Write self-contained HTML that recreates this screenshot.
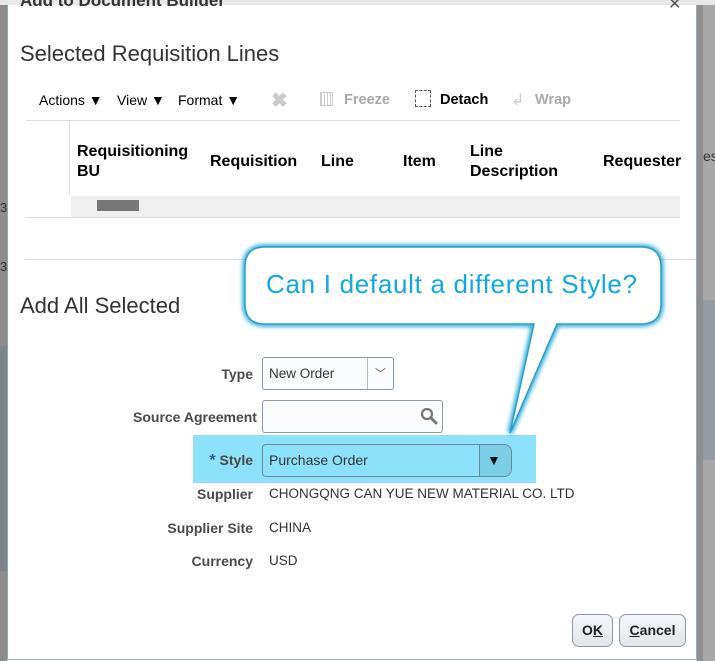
<!DOCTYPE html>
<html><head><meta charset="utf-8"><style>
*{margin:0;padding:0;box-sizing:border-box}
body{width:715px;height:661px;overflow:hidden;position:relative;background:#fff;font-family:"Liberation Sans",Arial,sans-serif;color:#333}
.a{position:absolute;white-space:nowrap}
.lbl{font-weight:bold;font-size:14px;color:#4a4a4a;text-align:right;width:120px}
.val{font-size:13.5px;color:#333}
.th{font-weight:bold;font-size:16px;color:#000;line-height:20px}
.tb{font-size:14px;color:#000}
</style></head><body>
<div class="a" style="left:0;top:0;width:7px;height:661px;background:#8c8c8c"></div>
<div class="a" style="left:0;top:346px;width:7px;height:225px;background:#7d838a"></div>
<div class="a" style="left:697px;top:0;width:18px;height:661px;background:#8f8f8f"></div>
<div class="a" style="left:703px;top:0;width:12px;height:661px;background:#a8a8a8"></div>
<div class="a" style="left:703px;top:300px;width:12px;height:160px;background:#959ba3"></div>
<div class="a" style="left:703px;top:148px;font-size:14px;color:#333">es</div>
<div class="a" style="left:0;top:200px;font-size:13px;color:#333">3</div>
<div class="a" style="left:0;top:259px;font-size:13px;color:#333">3</div>
<div class="a" style="left:0;top:0;width:715px;height:5px;background:#e8e8e8"></div>
<div class="a" style="left:7px;top:5px;width:690px;height:655px;background:#fff;border-left:1px solid #8aa;border-right:1px solid #9ab;border-bottom:1px solid #9ab"></div>
<div class="a" style="left:20px;top:-9px;font-size:17px;font-weight:bold;color:#333">Add to Document Builder</div>
<div class="a" style="left:668px;top:-6px;font-size:16px;color:#555">✕</div>
<div class="a" style="left:20px;top:41px;font-size:22px;color:#333">Selected Requisition Lines</div>
<div class="a tb" style="left:39px;top:92px">Actions&nbsp;▼</div>
<div class="a tb" style="left:117px;top:92px">View&nbsp;▼</div>
<div class="a tb" style="left:178px;top:92px">Format&nbsp;▼</div>
<div class="a" style="left:271px;top:88px;font-size:20px;color:#ccc;font-weight:bold">✖</div>
<div class="a" style="left:320px;top:92px;width:13px;height:14px;border:1px solid #ccc;background:repeating-linear-gradient(90deg,#ccc 0 1px,#fff 1px 3px)"></div>
<div class="a tb" style="left:344px;top:92px;color:#aaa;font-weight:bold;font-size:14.5px">Freeze</div>
<div class="a" style="left:415px;top:90px;width:16px;height:17px;border:1px dashed #555"></div>
<div class="a tb" style="left:440px;top:92px;font-weight:bold;font-size:14.5px">Detach</div>
<div class="a tb" style="left:511px;top:90px;color:#ccc;font-size:16px">↲</div>
<div class="a tb" style="left:535px;top:92px;color:#aaa;font-weight:bold;font-size:14.5px">Wrap</div>
<div class="a" style="left:26px;top:120px;width:654px;height:1px;background:#d6dfe6"></div>
<div class="a" style="left:69px;top:121px;width:1px;height:74px;background:#d6dfe6"></div>
<div class="a th" style="left:77px;top:142px">Requisitioning<br>BU</div>
<div class="a th" style="left:210px;top:152px">Requisition</div>
<div class="a th" style="left:321px;top:152px">Line</div>
<div class="a th" style="left:403px;top:152px">Item</div>
<div class="a th" style="left:470px;top:142px">Line<br>Description</div>
<div class="a th" style="left:603px;top:152px">Requester</div>
<div class="a" style="left:71px;top:196px;width:609px;height:21px;background:#efefef"></div>
<div class="a" style="left:97px;top:200px;width:42px;height:11px;background:#777"></div>
<div class="a" style="left:26px;top:217px;width:654px;height:1px;background:#d6dfe6"></div>
<div class="a" style="left:26px;top:259px;width:670px;height:1px;background:#d6dfe6"></div>
<div class="a" style="left:20px;top:293px;font-size:22px;color:#333">Add All Selected</div>
<div class="a lbl" style="left:133px;top:366px">Type</div>
<div class="a" style="left:262px;top:357px;width:132px;height:33px;border:1px solid #8b9aa6;border-radius:3px;background:#fbfcfd"></div>
<div class="a val" style="left:269px;top:366px">New Order</div>
<div class="a" style="left:367px;top:358px;width:1px;height:31px;background:#bbb"></div>
<div class="a" style="left:375px;top:365px;font-size:11px;color:#555">﹀</div>
<div class="a lbl" style="left:133px;top:409px">Source Agreement</div>
<div class="a" style="left:262px;top:400px;width:181px;height:33px;border:1px solid #8b9aa6;border-radius:3px;background:#fbfcfd"></div>
<svg class="a" style="left:420px;top:407px" width="18" height="18"><circle cx="7" cy="7" r="5" fill="none" stroke="#777" stroke-width="2.2"/><line x1="11" y1="11" x2="16" y2="16" stroke="#777" stroke-width="3" stroke-linecap="round"/></svg>
<div class="a" style="left:193px;top:435px;width:343px;height:48px;background:#8ee1fb"></div>
<div class="a lbl" style="left:133px;top:452px"><span style="color:#1a5fa0;font-size:16px">*</span> Style</div>
<div class="a" style="left:262px;top:444px;width:250px;height:33px;border:1px solid #6d8797;border-radius:4px 8px 8px 4px;background:#8ee1fb"></div>
<div class="a val" style="left:269px;top:452px;font-size:14px">Purchase Order</div>
<div class="a" style="left:479px;top:445px;width:32px;height:31px;border-left:1px solid #6d8797;background:#7ccde6;border-radius:0 7px 7px 0"></div>
<div class="a" style="left:487px;top:452px;font-size:14px;color:#111">▼</div>
<div class="a lbl" style="left:133px;top:486px">Supplier</div>
<div class="a val" style="left:269px;top:486px">CHONGQNG CAN YUE NEW MATERIAL CO. LTD</div>
<div class="a lbl" style="left:133px;top:520px">Supplier Site</div>
<div class="a val" style="left:269px;top:520px">CHINA</div>
<div class="a lbl" style="left:133px;top:553px">Currency</div>
<div class="a val" style="left:269px;top:553px">USD</div>
<div class="a" style="left:572px;top:614px;width:41px;height:33px;border:1px solid #8a9aa8;border-radius:7px;background:linear-gradient(#f4f6f8,#e2e7ec);font-weight:bold;font-size:14px;text-align:center;line-height:31px;color:#222">O<u>K</u></div>
<div class="a" style="left:619px;top:614px;width:67px;height:33px;border:1px solid #8a9aa8;border-radius:7px;background:linear-gradient(#f4f6f8,#e2e7ec);font-weight:bold;font-size:14px;text-align:center;line-height:31px;color:#222"><u>C</u>ancel</div>
<svg class="a" style="left:0;top:0" width="715" height="661">
<defs><filter id="g" x="-10%" y="-10%" width="120%" height="120%"><feGaussianBlur stdDeviation="2"/></filter></defs>
<path d="M265 247 H641 Q661 247 661 267 V304 Q661 324 641 324 H557 L510 433 L534 324 H265 Q245 324 245 304 V267 Q245 247 265 247 Z" fill="none" stroke="#1aa6d8" stroke-width="5" filter="url(#g)"/>
<path d="M265 247 H641 Q661 247 661 267 V304 Q661 324 641 324 H557 L510 433 L534 324 H265 Q245 324 245 304 V267 Q245 247 265 247 Z" fill="#fff" stroke="#2aa0c8" stroke-width="1.5"/>
<text x="266" y="293" font-family="Liberation Sans, Arial, sans-serif" font-size="26" textLength="371" fill="#12a8e0">Can I default a different Style?</text>
</svg>
</body></html>
